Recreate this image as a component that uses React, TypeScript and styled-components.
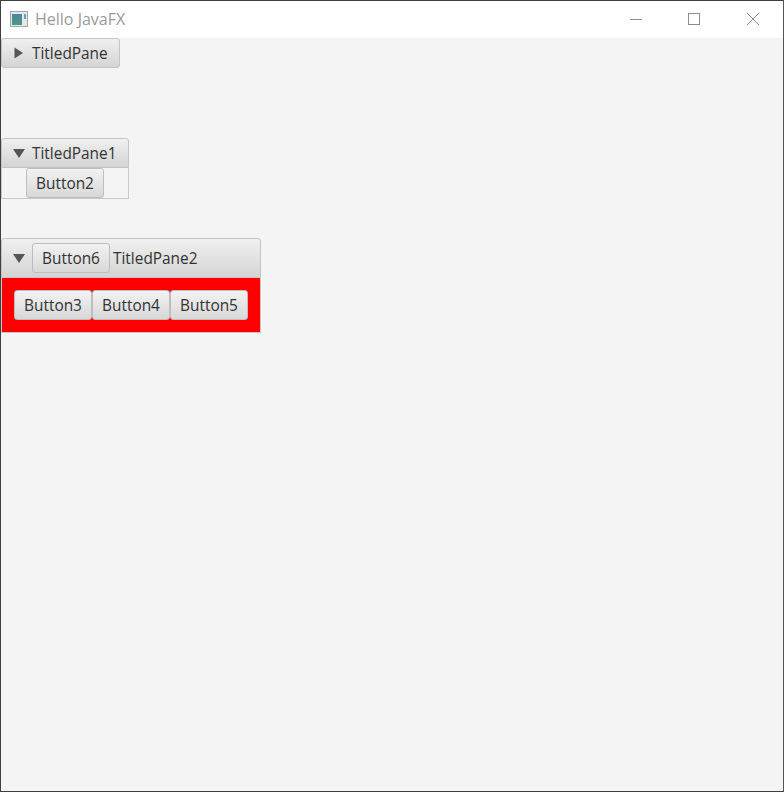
import React from "react";
import styled, { createGlobalStyle } from "styled-components";

const GlobalStyle = createGlobalStyle`
    html, body {
        margin: 0;
        padding: 0;
        background: #f4f4f4;
    }
    body {
        font-family: "Open Sans", "Noto Sans", sans-serif;
    }
`;

const Window = styled.div`
    box-sizing: border-box;
    width: 784px;
    height: 792px;
    border: 1px solid #3f3f3f;
    border-right-color: #555;
    display: flex;
    flex-direction: column;
    background: #f4f4f4;
    overflow: hidden;
`;

const TitleBar = styled.div`
    box-sizing: border-box;
    height: 37px;
    flex: none;
    background: #ffffff;
    display: flex;
    align-items: center;
    padding: 0 0 2px 9px;
`;

const AppTitle = styled.span`
    margin-left: 7px;
    font-size: 16px;
    color: #9a9a9a;
`;

const WindowControls = styled.div`
    margin-left: auto;
    padding-right: 1px;
    display: flex;
    color: #8c8c8c;
`;

const ControlButton = styled.div`
    width: 58.5px;
    height: 35px;
    display: flex;
    align-items: center;
    justify-content: center;
`;

const Content = styled.div`
    display: flex;
    flex-direction: column;
    align-items: flex-start;
`;

const Pane = styled.div<{ $gap: number }>`
    margin-bottom: ${(p) => p.$gap}px;
`;

const PaneHeader = styled.div<{ $height: number; $width: number; $open: boolean }>`
    box-sizing: border-box;
    width: ${(p) => p.$width}px;
    height: ${(p) => p.$height}px;
    display: flex;
    align-items: center;
    padding-left: 11px;
    border: 1px solid #c4c4c4;
    border-radius: ${(p) => (p.$open ? "3px 3px 0 0" : "3px")};
    background: linear-gradient(#f0f0f0, #d4d4d4);
    font-size: 15.4px;
    color: #333;
    white-space: nowrap;
`;

const Arrow = styled.svg`
    width: 12px;
    height: 12px;
    flex: none;
    fill: #555;
`;

const HeaderLabel = styled.span<{ $left: number }>`
    margin-left: ${(p) => p.$left}px;
`;

const PaneBody = styled.div<{ $red?: boolean; $width: number }>`
    box-sizing: border-box;
    width: ${(p) => p.$width}px;
    display: flex;
    padding: ${(p) => (p.$red ? "12px" : "0 0 0 24px")};
    border: 1px solid #c8c8c8;
    border-top: none;
    background: ${(p) => (p.$red ? "#ff0000" : "#f4f4f4")};
`;

const Button = styled.div`
    box-sizing: border-box;
    height: 30px;
    width: 78px;
    flex: none;
    display: flex;
    align-items: center;
    justify-content: center;
    border: 1px solid #bdbdbd;
    border-radius: 3px;
    background: linear-gradient(#f2f2f2, #d8d8d8);
    font-size: 15.4px;
    color: #333;
`;

const ArrowRight = () => (
    <Arrow viewBox="0 0 12 12">
        <polygon points="1.5,0.5 10,6 1.5,11.5" />
    </Arrow>
);

const ArrowDown = () => (
    <Arrow viewBox="0 0 12 12">
        <polygon points="0,2 12,2 6,11" />
    </Arrow>
);

const App: React.FC = () => (
    <>
        <GlobalStyle />
        <Window>
            <TitleBar>
                <svg width="18" height="16" viewBox="0 0 18 16">
                    <defs>
                        <linearGradient id="appIcon" x1="0" y1="0" x2="0" y2="1">
                            <stop offset="0" stopColor="#4d87a8" />
                            <stop offset="1" stopColor="#4a9a78" />
                        </linearGradient>
                    </defs>
                    <rect x="0.5" y="0.5" width="17" height="15" fill="#e4e8ea" stroke="#a0a6aa" />
                    <rect x="2" y="3" width="10" height="11" fill="url(#appIcon)" />
                    <rect x="14" y="3" width="2" height="5" fill="#6a9fb8" />
                </svg>
                <AppTitle>Hello JavaFX</AppTitle>
                <WindowControls>
                    <ControlButton>
                        <svg width="12" height="12" viewBox="0 0 12 12">
                            <line x1="0" y1="6.5" x2="12" y2="6.5" stroke="currentColor" />
                        </svg>
                    </ControlButton>
                    <ControlButton>
                        <svg width="12" height="12" viewBox="0 0 12 12">
                            <rect x="0.5" y="0.5" width="11" height="11" fill="none" stroke="currentColor" />
                        </svg>
                    </ControlButton>
                    <ControlButton>
                        <svg width="12" height="12" viewBox="0 0 12 12">
                            <path d="M0 0L12 12M12 0L0 12" stroke="currentColor" />
                        </svg>
                    </ControlButton>
                </WindowControls>
            </TitleBar>
            <Content>
                <Pane $gap={70}>
                    <PaneHeader $width={119} $height={30} $open={false}>
                        <ArrowRight />
                        <HeaderLabel $left={7}>TitledPane</HeaderLabel>
                    </PaneHeader>
                </Pane>
                <Pane $gap={39}>
                    <PaneHeader $width={128} $height={30} $open>
                        <ArrowDown />
                        <HeaderLabel $left={7}>TitledPane1</HeaderLabel>
                    </PaneHeader>
                    <PaneBody $width={128}>
                        <Button>Button2</Button>
                    </PaneBody>
                </Pane>
                <Pane $gap={0}>
                    <PaneHeader $width={260} $height={40} $open>
                        <ArrowDown />
                        <HeaderLabel $left={7}>
                            <Button>Button6</Button>
                        </HeaderLabel>
                        <HeaderLabel $left={3}>TitledPane2</HeaderLabel>
                    </PaneHeader>
                    <PaneBody $width={260} $red>
                        <Button>Button3</Button>
                        <Button>Button4</Button>
                        <Button>Button5</Button>
                    </PaneBody>
                </Pane>
            </Content>
        </Window>
    </>
);

export default App;
